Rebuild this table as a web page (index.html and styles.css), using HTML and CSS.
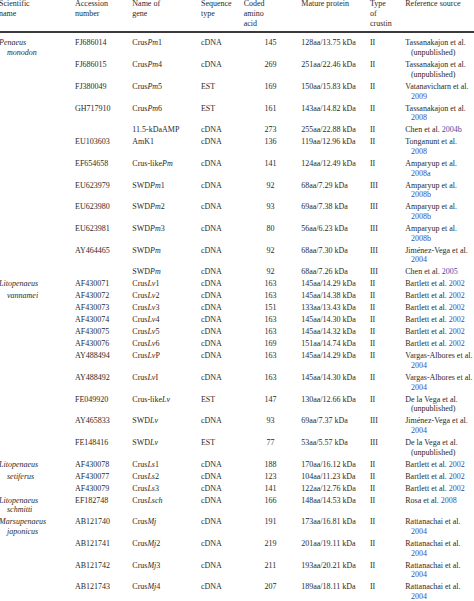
FILE: index.html
```html
<!DOCTYPE html>
<html>
<head>
<meta charset="utf-8">
<link rel="stylesheet" href="styles.css">
</head>
<body>
<div class="tbl">
  <div class="h">Scientific<br>name</div>
  <div class="h">Accession<br>number</div>
  <div class="h">Name of<br>gene</div>
  <div class="h">Sequence<br>type</div>
  <div class="h">Coded<br>amino<br>acid</div>
  <div class="h">Mature protein</div>
  <div class="h">Type<br>of<br>crustin</div>
  <div class="h">Reference source</div>
  <div class="rule"></div>

  <div class="c sp">Penaeus<span class="cont">monodon</span></div>
  <div class="c">FJ686014</div><div class="c">Crus<i>Pm</i>1</div><div class="c">cDNA</div><div class="c num">145</div><div class="c">128aa/13.75 kDa</div><div class="c">II</div>
  <div class="c">Tassanakajon et al.<span class="ref2">(unpublished)</span></div>

  <div class="c sp"></div>
  <div class="c">FJ686015</div><div class="c">Crus<i>Pm</i>4</div><div class="c">cDNA</div><div class="c num">269</div><div class="c">251aa/22.46 kDa</div><div class="c">II</div>
  <div class="c">Tassanakajon et al.<span class="ref2">(unpublished)</span></div>

  <div class="c sp"></div>
  <div class="c">FJ380049</div><div class="c">Crus<i>Pm</i>5</div><div class="c">EST</div><div class="c num">169</div><div class="c">150aa/15.83 kDa</div><div class="c">II</div>
  <div class="c">Vatanavicharn et al.<span class="ref2 yr">2009</span></div>

  <div class="c sp"></div>
  <div class="c">GH717910</div><div class="c">Crus<i>Pm</i>6</div><div class="c">EST</div><div class="c num">161</div><div class="c">143aa/14.82 kDa</div><div class="c">II</div>
  <div class="c">Tassanakajon et al.<span class="ref2 yr">2008</span></div>

  <div class="c sp"></div>
  <div class="c"></div><div class="c">11.5-kDaAMP</div><div class="c">cDNA</div><div class="c num">273</div><div class="c">255aa/22.88 kDa</div><div class="c">II</div>
  <div class="c">Chen et al. <span class="yr">2004b</span></div>

  <div class="c sp"></div>
  <div class="c">EU103603</div><div class="c">AmK1</div><div class="c">cDNA</div><div class="c num">136</div><div class="c">119aa/12.96 kDa</div><div class="c">II</div>
  <div class="c">Tonganunt et al.<span class="ref2 yr">2008</span></div>

  <div class="c sp"></div>
  <div class="c">EF654658</div><div class="c">Crus-like<i>Pm</i></div><div class="c">cDNA</div><div class="c num">141</div><div class="c">124aa/12.49 kDa</div><div class="c">II</div>
  <div class="c">Amparyup et al.<span class="ref2 yr">2008a</span></div>

  <div class="c sp"></div>
  <div class="c">EU623979</div><div class="c">SWD<i>Pm</i>1</div><div class="c">cDNA</div><div class="c num">92</div><div class="c">68aa/7.29 kDa</div><div class="c">III</div>
  <div class="c">Amparyup et al.<span class="ref2 yr">2008b</span></div>

  <div class="c sp"></div>
  <div class="c">EU623980</div><div class="c">SWD<i>Pm</i>2</div><div class="c">cDNA</div><div class="c num">93</div><div class="c">69aa/7.38 kDa</div><div class="c">III</div>
  <div class="c">Amparyup et al.<span class="ref2 yr">2008b</span></div>

  <div class="c sp"></div>
  <div class="c">EU623981</div><div class="c">SWD<i>Pm</i>3</div><div class="c">cDNA</div><div class="c num">80</div><div class="c">56aa/6.23 kDa</div><div class="c">III</div>
  <div class="c">Amparyup et al.<span class="ref2 yr">2008b</span></div>

  <div class="c sp"></div>
  <div class="c">AY464465</div><div class="c">SWD<i>Pm</i></div><div class="c">cDNA</div><div class="c num">92</div><div class="c">68aa/7.30 kDa</div><div class="c">III</div>
  <div class="c">Jiménez-Vega et al.<span class="ref2 yr">2004</span></div>

  <div class="c sp"></div>
  <div class="c"></div><div class="c">SWD<i>Pm</i></div><div class="c">cDNA</div><div class="c num">92</div><div class="c">68aa/7.26 kDa</div><div class="c">III</div>
  <div class="c">Chen et al. <span class="yr">2005</span></div>

  <div class="c sp">Litopenaeus</div>
  <div class="c">AF430071</div><div class="c">Crus<i>Lv</i>1</div><div class="c">cDNA</div><div class="c num">163</div><div class="c">145aa/14.29 kDa</div><div class="c">II</div>
  <div class="c">Bartlett et al. <span class="yr">2002</span></div>

  <div class="c sp ind">vannamei</div>
  <div class="c">AF430072</div><div class="c">Crus<i>Lv</i>2</div><div class="c">cDNA</div><div class="c num">163</div><div class="c">145aa/14.38 kDa</div><div class="c">II</div>
  <div class="c">Bartlett et al. <span class="yr">2002</span></div>

  <div class="c sp"></div>
  <div class="c">AF430073</div><div class="c">Crus<i>Lv</i>3</div><div class="c">cDNA</div><div class="c num">151</div><div class="c">133aa/13.43 kDa</div><div class="c">II</div>
  <div class="c">Bartlett et al. <span class="yr">2002</span></div>

  <div class="c sp"></div>
  <div class="c">AF430074</div><div class="c">Crus<i>Lv</i>4</div><div class="c">cDNA</div><div class="c num">163</div><div class="c">145aa/14.30 kDa</div><div class="c">II</div>
  <div class="c">Bartlett et al. <span class="yr">2002</span></div>

  <div class="c sp"></div>
  <div class="c">AF430075</div><div class="c">Crus<i>Lv</i>5</div><div class="c">cDNA</div><div class="c num">163</div><div class="c">145aa/14.32 kDa</div><div class="c">II</div>
  <div class="c">Bartlett et al. <span class="yr">2002</span></div>

  <div class="c sp"></div>
  <div class="c">AF430076</div><div class="c">Crus<i>Lv</i>6</div><div class="c">cDNA</div><div class="c num">169</div><div class="c">151aa/14.74 kDa</div><div class="c">II</div>
  <div class="c">Bartlett et al. <span class="yr">2002</span></div>

  <div class="c sp"></div>
  <div class="c">AY488494</div><div class="c">Crus<i>Lv</i>P</div><div class="c">cDNA</div><div class="c num">163</div><div class="c">145aa/14.29 kDa</div><div class="c">II</div>
  <div class="c">Vargas-Albores et al.<span class="ref2 yr">2004</span></div>

  <div class="c sp"></div>
  <div class="c">AY488492</div><div class="c">Crus<i>Lv</i>I</div><div class="c">cDNA</div><div class="c num">163</div><div class="c">145aa/14.30 kDa</div><div class="c">II</div>
  <div class="c">Vargas-Albores et al.<span class="ref2 yr">2004</span></div>

  <div class="c sp"></div>
  <div class="c">FE049920</div><div class="c">Crus-like<i>Lv</i></div><div class="c">EST</div><div class="c num">147</div><div class="c">130aa/12.66 kDa</div><div class="c">II</div>
  <div class="c">De la Vega et al.<span class="ref2">(unpublished)</span></div>

  <div class="c sp"></div>
  <div class="c">AY465833</div><div class="c">SWD<i>Lv</i></div><div class="c">cDNA</div><div class="c num">93</div><div class="c">69aa/7.37 kDa</div><div class="c">III</div>
  <div class="c">Jiménez-Vega et al.<span class="ref2 yr">2004</span></div>

  <div class="c sp"></div>
  <div class="c">FE148416</div><div class="c">SWD<i>Lv</i></div><div class="c">EST</div><div class="c num">77</div><div class="c">53aa/5.57 kDa</div><div class="c">III</div>
  <div class="c">De la Vega et al.<span class="ref2">(unpublished)</span></div>

  <div class="c sp">Litopenaeus</div>
  <div class="c">AF430078</div><div class="c">Crus<i>Ls</i>1</div><div class="c">cDNA</div><div class="c num">188</div><div class="c">170aa/16.12 kDa</div><div class="c">II</div>
  <div class="c">Bartlett et al. <span class="yr">2002</span></div>

  <div class="c sp ind">setiferus</div>
  <div class="c">AF430077</div><div class="c">Crus<i>Ls</i>2</div><div class="c">cDNA</div><div class="c num">123</div><div class="c">104aa/11.23 kDa</div><div class="c">II</div>
  <div class="c">Bartlett et al. <span class="yr">2002</span></div>

  <div class="c sp"></div>
  <div class="c">AF430079</div><div class="c">Crus<i>Ls</i>3</div><div class="c">cDNA</div><div class="c num">141</div><div class="c">122aa/12.76 kDa</div><div class="c">II</div>
  <div class="c">Bartlett et al. <span class="yr">2002</span></div>

  <div class="c sp">Litopenaeus<span class="cont">schmitti</span></div>
  <div class="c">EF182748</div><div class="c">Crus<i>Lsch</i></div><div class="c">cDNA</div><div class="c num">166</div><div class="c">148aa/14.53 kDa</div><div class="c">II</div>
  <div class="c">Rosa et al. <span class="yr">2008</span></div>

  <div class="c sp">Marsupenaeus<span class="cont">japonicus</span></div>
  <div class="c">AB121740</div><div class="c">Crus<i>Mj</i></div><div class="c">cDNA</div><div class="c num">191</div><div class="c">173aa/16.81 kDa</div><div class="c">II</div>
  <div class="c">Rattanachai et al.<span class="ref2 yr">2004</span></div>

  <div class="c sp"></div>
  <div class="c">AB121741</div><div class="c">Crus<i>Mj</i>2</div><div class="c">cDNA</div><div class="c num">219</div><div class="c">201aa/19.11 kDa</div><div class="c">II</div>
  <div class="c">Rattanachai et al.<span class="ref2 yr">2004</span></div>

  <div class="c sp"></div>
  <div class="c">AB121742</div><div class="c">Crus<i>Mj</i>3</div><div class="c">cDNA</div><div class="c num">211</div><div class="c">193aa/20.21 kDa</div><div class="c">II</div>
  <div class="c">Rattanachai et al.<span class="ref2 yr">2004</span></div>

  <div class="c sp"></div>
  <div class="c">AB121743</div><div class="c">Crus<i>Mj</i>4</div><div class="c">cDNA</div><div class="c num">207</div><div class="c">189aa/18.11 kDa</div><div class="c">II</div>
  <div class="c">Rattanachai et al.<span class="ref2 yr">2004</span></div>
</div>
</body>
</html>
```

FILE: styles.css
```css
html, body {
  margin: 0;
  padding: 0;
  background: #ffffff;
  overflow: hidden;
}

body {
  font-family: "Liberation Serif", "Times New Roman", serif;
  font-size: 8px;
  color: #2a2a2a;
}

.tbl {
  display: grid;
  grid-template-columns: 76px 57.3px 68.7px 42.7px 57.6px 68.7px 35.3px 72px;
  width: max-content;
  margin-left: -1px;
  margin-top: -1.5px;
}

.h {
  line-height: 10px;
  white-space: nowrap;
}

.rule {
  grid-column: 1 / -1;
  height: 2px;
  background: #3a3a3a;
  margin: 2.5px 0 4.3px;
}

.c {
  line-height: 9.7px;
  padding: 1.15px 0;
  white-space: nowrap;
}

.sp {
  font-style: italic;
}

.cont {
  display: block;
  padding-left: 8px;
}

.ind {
  padding-left: 8px;
}

.num {
  text-align: center;
  padding-right: 4px;
}

.ref2 {
  display: block;
  padding-left: 5.7px;
}

.yr {
  color: #3d4cae;
}
```
